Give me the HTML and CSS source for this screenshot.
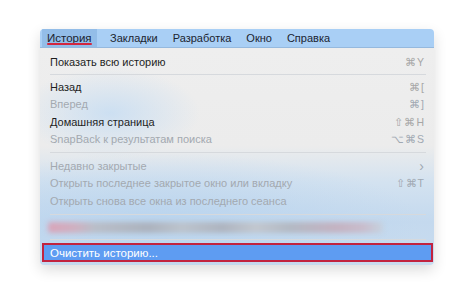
FILE: index.html
```html
<!DOCTYPE html>
<html lang="ru">
<head>
    <meta charset="UTF-8">
    <meta name="viewport" content="width=device-width, initial-scale=1.0">
    <title>История</title>
    <link rel="stylesheet" href="styles.css">
</head>
<body>
    <div class="menu">
        <div class="menubar">
            <span class="top-item active">История</span>
            <span class="top-item">Закладки</span>
            <span class="top-item">Разработка</span>
            <span class="top-item">Окно</span>
            <span class="top-item">Справка</span>
        </div>
        <div class="dropdown">
            <div class="row"><span>Показать всю историю</span><span class="key">⌘Y</span></div>
            <div class="sep"></div>
            <div class="row"><span>Назад</span><span class="key">⌘[</span></div>
            <div class="row off"><span>Вперед</span><span class="key">⌘]</span></div>
            <div class="row"><span>Домашняя страница</span><span class="key">⇧⌘H</span></div>
            <div class="row off"><span>SnapBack к результатам поиска</span><span class="key">⌥⌘S</span></div>
            <div class="sep sep-wide"></div>
            <div class="row off"><span>Недавно закрытые</span><span class="key arrow">›</span></div>
            <div class="row off"><span>Открыть последнее закрытое окно или вкладку</span><span class="key">⇧⌘T</span></div>
            <div class="row off"><span>Открыть снова все окна из последнего сеанса</span></div>
            <div class="sep sep-wide"></div>
            <div class="row blurred">
                <span class="smear"></span>
            </div>
            <div class="sep"></div>
            <div class="row selected"><span>Очистить историю...</span></div>
        </div>
    </div>
</body>
</html>
```

FILE: styles.css
```css
body {
    margin: 0;
    background-color: #ffffff;
    font-family: 'Liberation Sans', Arial, sans-serif;
    font-size: 11px;
    width: 474px;
    height: 294px;
    overflow: hidden;
}

.menu {
    margin: 29px 0 0 40px;
    width: 394px;
    border-radius: 4px;
    box-shadow: 0 5px 14px rgba(0, 0, 0, 0.14);
    overflow: hidden;
}

.menubar {
    display: flex;
    height: 18px;
    align-items: stretch;
    background-color: #a9cff5;
    border-bottom: 1px solid #95b9de;
    padding-left: 2px;
}

.top-item {
    display: flex;
    align-items: center;
    padding: 0 7.5px;
    color: #1b2430;
    font-size: 11px;
}

.top-item.active {
    background-color: #93bde8;
    padding: 0 5px 0 5px;
    margin-right: 6px;
    position: relative;
    font-size: 11.5px;
}

.top-item.active::after {
    content: "";
    position: absolute;
    left: 5px;
    right: 5px;
    bottom: 2px;
    height: 2px;
    border-radius: 1px;
    background-color: #d3263e;
}

.dropdown {
    padding: 5px 0 3px;
    background:
        radial-gradient(ellipse 90px 45px at 70px 65px, rgba(196, 220, 243, 0.8), rgba(196, 220, 243, 0) 100%),
        radial-gradient(ellipse 260px 70px at 120px 175px, rgba(185, 212, 238, 0.9), rgba(185, 212, 238, 0) 100%),
        linear-gradient(180deg, #eeeeee 0%, #ececec 45%, #d3e2f0 62%, #c4d9ee 80%, #c9dcef 100%);
}

.row {
    display: flex;
    justify-content: space-between;
    align-items: center;
    height: 17.5px;
    padding: 0 9px 0 10px;
    color: #1e1e1e;
}

.row:first-child {
    height: 18px;
}

.row.off {
    color: #a3a9b0;
}

.key {
    color: #a6a6a6;
    letter-spacing: 1px;
    font-size: 10.5px;
}

.row.off .key {
    color: #a0a8b2;
}

.arrow {
    font-size: 14px;
}

.sep {
    height: 1px;
    margin: 3px 8px 3px 10px;
    background-color: #d6d9dd;
}

.sep-wide {
    margin-top: 4px;
    margin-bottom: 4px;
}

.blurred {
    justify-content: flex-start;
    padding-left: 8px;
}

.smear {
    width: 335px;
    height: 11px;
    border-radius: 3px;
    filter: blur(2.5px);
    background: linear-gradient(90deg,
        #d9a4b9 0%, #cfb0c0 8%, #b9bec8 14%, #acb2bd 30%, #bcc3cc 40%,
        #aeb4bf 52%, #c2c7cf 62%, #b3b9c3 72%, #c4b2c1 86%, #c9bccb 94%, #c6d2df 100%);
}

.row.selected {
    height: 15px;
    margin: 3px 1px 0 2px;
    padding-left: 6px;
    background-color: #5e9cf2;
    border: 2px solid #c2233f;
    color: #ffffff;
    font-size: 11.5px;
}
```
